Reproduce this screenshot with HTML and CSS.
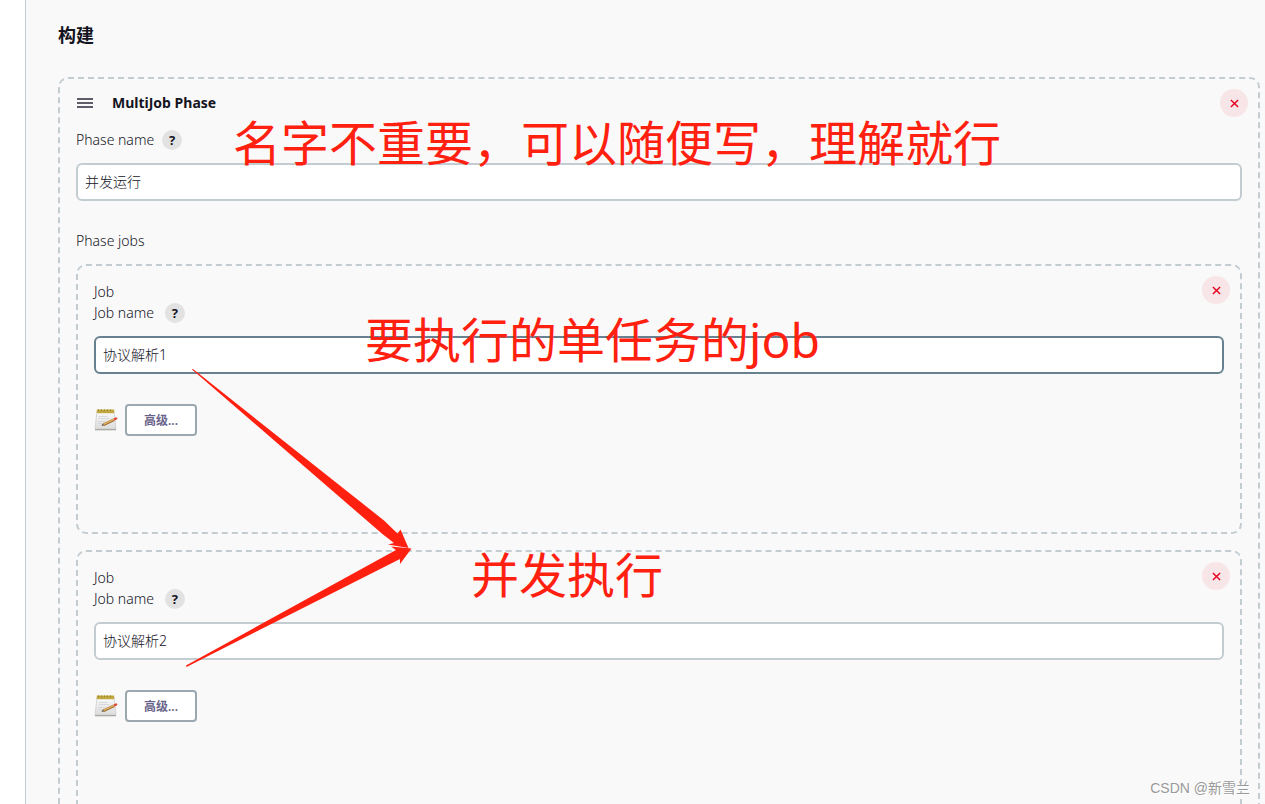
FILE: index.html
```html
<!DOCTYPE html>
<html lang="zh-CN">
<head>
   <meta charset="utf-8">
   <title>构建</title>
   <meta name="viewport" content="width=device-width, initial-scale=1">
   <link rel="stylesheet" href="styles.css">
</head>

<body>
<!-- shared icons -->
<svg class="defs" width="0" height="0" aria-hidden="true">
   <defs>
      <linearGradient id="paper" x1="0" y1="0" x2="0" y2="1">
         <stop offset="0" stop-color="#fbfbfb"/>
         <stop offset="1" stop-color="#dcdcdc"/>
      </linearGradient>
   </defs>
   <symbol id="icon-close" viewBox="0 0 10 10">
      <path d="M1 1l8 8M9 1L1 9" stroke="#e6001f" stroke-width="1.6" fill="none"/>
   </symbol>
   <symbol id="icon-notepad" viewBox="0 0 24 24">
      <path d="M3 3h17l2 18H1z" fill="url(#paper)" stroke="#c9c9c5" stroke-width=".7"/>
      <path d="M1 21h21v1.300H1z" fill="#a9a9a5"/>
      <path d="M2.800 1.500h17.400v3.700H2.800z" fill="#c0a83e"/>
      <path d="M4.500 1.500v1.500M7.500 1.500v1.500M10.500 1.500v1.500M13.500 1.500v1.500M16.500 1.500v1.500" stroke="#94822c" stroke-width="1"/>
      <path d="M4.500 8.500h9M4.500 10.500h11M4 13.500h7M4 15.500h4" stroke="#d0d3d6" stroke-width=".8"/>
      <path d="M9.500 16.700l10.500-4.900" stroke="#9a6a2a" stroke-width="2.800"/>
      <path d="M9.500 16.300l10.500-4.900" stroke="#e6b566" stroke-width="1.300"/>
      <path d="M7.400 17.800l1.500-2.200 1.100 2z" fill="#5b4a38"/>
      <path d="M19.600 10.500l2.400-1.200q1.600 0 1.400 1.700l-2.900 1.700z" fill="#e0483a"/>
   </symbol>
</svg>

<main class="content">
   <h1 class="sectionTitle">构建</h1>

   <section class="chunk phase">
      <button class="btnDelete" type="button" aria-label="Delete phase"><svg width="9" height="9"><use href="#icon-close"/></svg></button>
      <div class="chunkHeader">
         <svg class="dragHandle" width="16" height="10" viewBox="0 0 16 10"><path d="M0 1h16M0 5h16M0 9h16" stroke="#2b2938" stroke-width="1.600"/></svg>
         <b>MultiJob Phase</b>
      </div>
      <div class="labelRow">
         <label for="phaseName">Phase name</label>
         <button class="btnHelp" type="button">?</button>
      </div>
      <input class="text" id="phaseName" type="text" value="并发运行">

      <div class="labelRow jobsLabel">Phase jobs</div>

      <section class="chunk job">
         <button class="btnDelete" type="button" aria-label="Delete job"><svg width="9" height="9"><use href="#icon-close"/></svg></button>
         <div class="jobType">Job</div>
         <div class="labelRow">
            <label for="jobName1">Job name</label>
            <button class="btnHelp" type="button">?</button>
         </div>
         <input class="text active" id="jobName1" type="text" value="协议解析1">
         <div class="advancedRow">
            <svg width="24" height="24"><use href="#icon-notepad"/></svg>
            <button class="btnAdvanced" type="button">高级...</button>
         </div>
      </section>

      <section class="chunk job">
         <button class="btnDelete" type="button" aria-label="Delete job"><svg width="9" height="9"><use href="#icon-close"/></svg></button>
         <div class="jobType">Job</div>
         <div class="labelRow">
            <label for="jobName2">Job name</label>
            <button class="btnHelp" type="button">?</button>
         </div>
         <input class="text" id="jobName2" type="text" value="协议解析2">
         <div class="advancedRow">
            <svg width="24" height="24"><use href="#icon-notepad"/></svg>
            <button class="btnAdvanced" type="button">高级...</button>
         </div>
      </section>
   </section>
</main>

<!-- notes drawn over the form -->
<div class="note noteName">名字不重要，可以随便写，理解就行</div>
<div class="note noteJob">要执行的单任务的job</div>
<div class="note noteParallel">并发执行</div>
<svg class="arrows" width="240" height="310" viewBox="180 360 240 310" fill="#ff2010" aria-hidden="true">
   <path d="M192 369.500L193 369L384 520.500L397.500 533.500L400.500 529.500L408.500 548L388 544.500L394 543L383 534.500Z"/>
   <path d="M186 665.500L396 550L391 546.500L411.500 548.500L400 564L400 559L186.500 667Z"/>
</svg>
<div class="watermark">CSDN @新雪兰</div>
</body>
</html>
```
FILE: styles.css
```css
* {
   box-sizing: border-box;
}
body {
   background-color: #fff;
   color: #14141f;
   font-family: "Noto Sans", "Noto Sans CJK SC", sans-serif;
   font-size: 14px;
   height: 100vh;
   margin: 0;
   overflow: hidden;
   position: relative;
}
.defs {
   position: absolute;
}
.content {
   background-color: #f9f9f9;
   border-left: 1px solid #c3ccd1;
   height: 100vh;
   margin-left: 25px;
   overflow: hidden;
   padding: 22px 5px 0 32px;
}
.sectionTitle {
   font-size: 18px;
   line-height: 26px;
   margin: 0 0 29px;
}

/* Dashed containers */
.chunk {
   border: 2px dashed #c3ccd1;
   border-radius: 10px;
   padding: 16px;
   position: relative;
}
.phase {
   padding-top: 12px;
}
.job {
   margin-bottom: 16px;
   min-height: 270px;
}
.chunkHeader {
   align-items: center;
   display: flex;
   gap: 19px;
   line-height: 24px;
   margin-bottom: 14px;
   padding-left: 1px;
}
.chunkHeader b {
   font-weight: 700;
}
.jobType {
   font-weight: 300;
   line-height: 20px;
}

/* Form styles */
.labelRow {
   align-items: center;
   display: flex;
   font-weight: 300;
   gap: 8px;
   line-height: 22px;
   margin-bottom: 12px;
}
.job .labelRow {
   gap: 11px;
}
.jobsLabel {
   margin-top: 29px;
}
input.text {
   background-color: #fff;
   border: 2px solid #c3ccd1;
   border-radius: 6px;
   color: #14141f;
   display: block;
   font-family: inherit;
   font-size: 14px;
   font-weight: 300;
   height: 38px;
   padding: 0 7px 2px;
   width: 100%;
}
input.active {
   border-color: #678190;
}
button {
   border: 0;
   cursor: pointer;
   font-family: inherit;
   padding: 0;
}
.btnHelp {
   background-color: #e2e2e2;
   border-radius: 50%;
   color: #14141f;
   font-size: 13px;
   font-weight: 700;
   height: 20px;
   line-height: 20px;
   width: 20px;
}
.btnDelete {
   align-items: center;
   background-color: #f7e5e7;
   border-radius: 50%;
   display: flex;
   height: 28px;
   justify-content: center;
   position: absolute;
   right: 10px;
   top: 10px;
   width: 28px;
}
.advancedRow {
   align-items: center;
   display: flex;
   gap: 7px;
   margin-top: 30px;
}
.btnAdvanced {
   background-color: #fff;
   border: 2px solid #9ba8b0;
   border-radius: 4px;
   color: #68638a;
   font-size: 12px;
   font-weight: 600;
   height: 32px;
   width: 72px;
}

/* Notes */
.note {
   color: #ff2010;
   font-size: 48px;
   font-weight: 400;
   line-height: 64px;
   position: absolute;
   white-space: nowrap;
}
.noteName {
   left: 233px;
   top: 111px;
}
.noteJob {
   left: 365px;
   top: 308px;
}
.noteParallel {
   left: 471px;
   top: 543px;
}
.arrows {
   left: 180px;
   position: absolute;
   top: 360px;
}
.watermark {
   bottom: 6px;
   color: #999;
   font-family: "Liberation Sans", "Noto Sans CJK SC", sans-serif;
   font-size: 14px;
   line-height: 20px;
   position: absolute;
   right: 15px;
   text-shadow: 1px 1px 0 #fff;
}
```
